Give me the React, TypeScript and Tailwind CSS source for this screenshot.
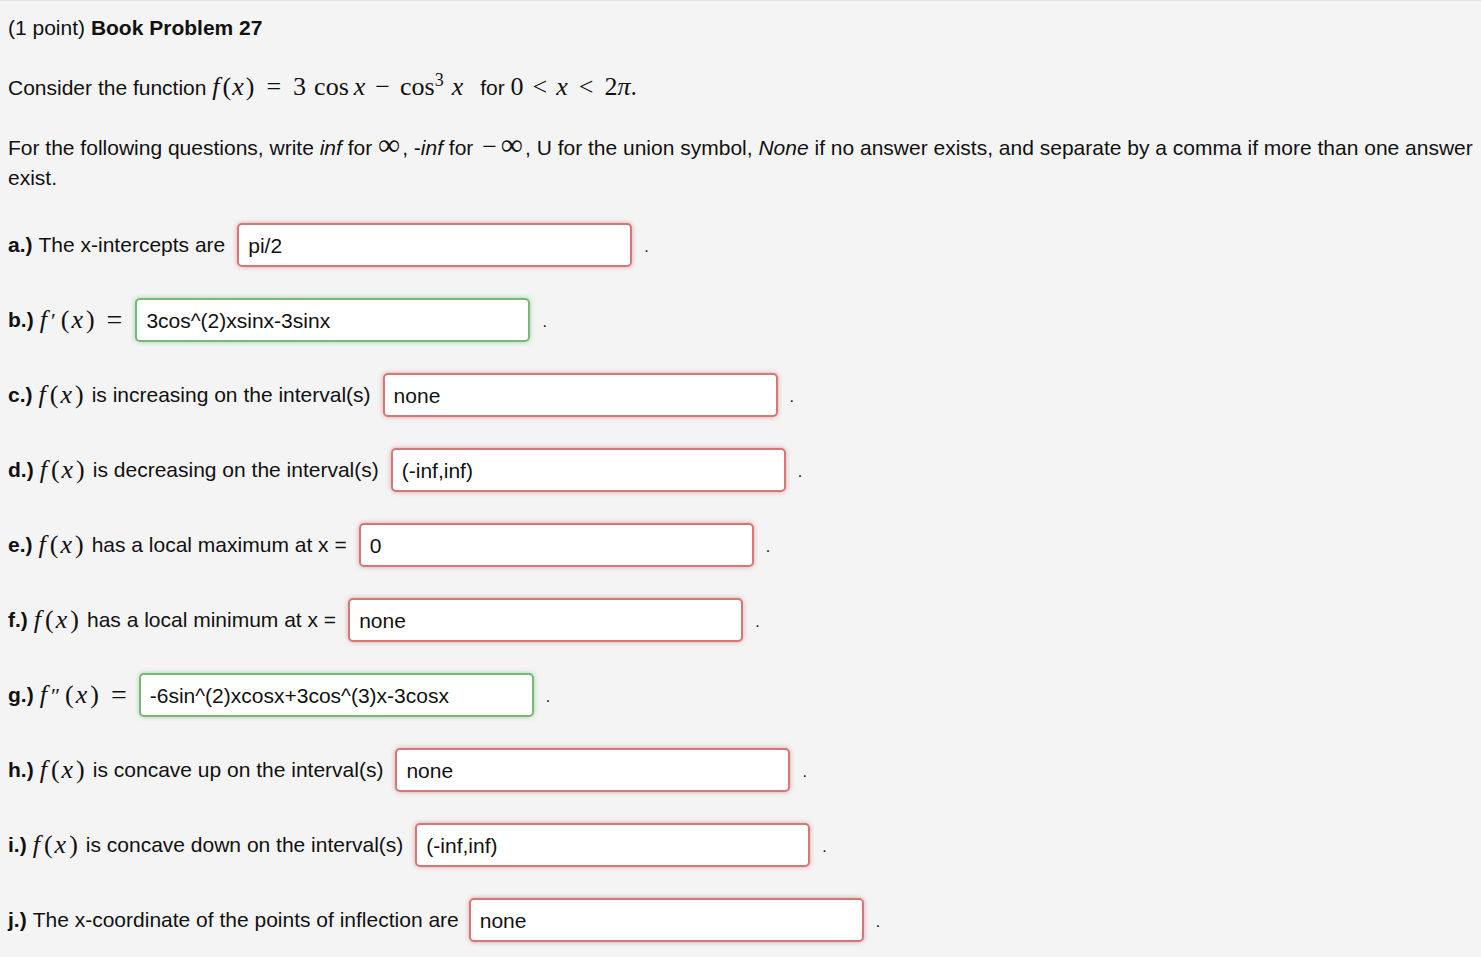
import React from 'react';

type Status = 'wrong' | 'right';

const M: React.FC<{ children: React.ReactNode; className?: string }> = ({ children, className }) => (
  <span className={`font-['Liberation_Serif','Times_New_Roman',serif] text-[26px] leading-none ${className ?? ''}`}>
    {children}
  </span>
);

const I: React.FC<{ children: React.ReactNode; className?: string }> = ({ children, className }) => (
  <span className={`italic ${className ?? ''}`}>{children}</span>
);

// f(x) typeset the way MathJax spaces it
const Fx: React.FC<{ prime?: string }> = ({ prime }) => (
  <M className="whitespace-nowrap">
    <I className="mr-[4px]">f</I>
    {prime && <span className="mr-[5px] text-[22px]">{prime}</span>}
    <span className="mr-[2px]">(</span>
    <I className="mr-[3px]">x</I>)
  </M>
);

const Inf: React.FC<{ minus?: boolean }> = ({ minus }) => (
  <span className="font-['Liberation_Serif','Times_New_Roman',serif] leading-[0] whitespace-nowrap">
    {minus && <span className="ml-[3px] mr-[4px] text-[26px] leading-[0]">−</span>}
    <span className="mr-[2px] text-[31px] leading-[0]">∞</span>
  </span>
);

const AnswerBox: React.FC<{ value: string; status: Status }> = ({ value, status }) => (
  <div
    className={
      status === 'right'
        ? 'flex h-[44px] w-[395px] items-center rounded-[5px] border-2 border-[#7ab67a] bg-white px-[9px] shadow-[0_0_5px_rgba(110,180,110,0.55)]'
        : 'flex h-[44px] w-[395px] items-center rounded-[5px] border-2 border-[#d27878] bg-white px-[9px] shadow-[0_0_5px_rgba(210,110,110,0.6)]'
    }
  >
    <span className="pt-[2px]">{value}</span>
  </div>
);

const Row: React.FC<{ tag: string; label: React.ReactNode; value: string; status?: Status; gap?: string }> = ({
  tag,
  label,
  value,
  status = 'wrong',
  gap = 'mr-[12px]',
}) => (
  <div className="mb-[31px] flex h-[44px] items-center">
    <span className="font-bold">{tag}</span>
    <span className={`ml-[6px] flex items-center gap-[8px] ${gap}`}>{label}</span>
    <AnswerBox value={value} status={status} />
    <span className="ml-[12px] pt-[4px] text-[16px]">.</span>
  </div>
);

export default function App() {
  return (
    <div className="min-h-[957px] border-y border-[#e2e2e2] bg-[#f4f4f4] pl-[8px] pt-[12px] font-['Liberation_Sans',Arial,sans-serif] text-[21px] leading-[30px] text-[#111]">
      <p className="mb-[30px]">
        (1 point) <span className="font-bold">Book Problem 27</span>
      </p>

      <p className="mb-[30px] whitespace-nowrap">
        Consider the function{' '}
        <M>
          <I className="mr-[3px]">f</I>
          <span className="mr-[1px]">(</span>
          <I className="mr-[2px]">x</I>)<span className="mx-[12px]">=</span>3
          <span className="ml-[8px]">cos</span>
          <I className="ml-[5px]">x</I>
          <span className="mx-[10px]">−</span>cos
          <sup className="text-[18px]">3</sup>
          <I className="ml-[8px]">x</I>
        </M>
        <span className="ml-[17px]">for </span>
        <M>
          0<span className="mx-[9px]">&lt;</span>
          <I>x</I>
          <span className="mx-[11px]">&lt;</span>2<I>π</I>.
        </M>
      </p>

      <p className="mb-[30px] pr-[6px]">
        For the following questions, write <I>inf</I> for <Inf />, -<I>inf</I> for <Inf minus />, U for the union
        symbol, <I>None</I> if no answer exists, and separate by a comma if more than one answer exist.
      </p>

      <Row tag="a.)" label={<span>The x-intercepts are</span>} value="pi/2" />
      <Row
        tag="b.)"
        label={
          <>
            <Fx prime="′" />
            <M className="ml-[4px] text-[28px]">=</M>
          </>
        }
        gap="mr-[13px]"
        value="3cos^(2)xsinx-3sinx"
        status="right"
      />
      <Row tag="c.)" label={<><Fx /><span>is increasing on the interval(s)</span></>} value="none" />
      <Row tag="d.)" label={<><Fx /><span>is decreasing on the interval(s)</span></>} value="(-inf,inf)" />
      <Row tag="e.)" label={<><Fx /><span>has a local maximum at x =</span></>} value="0" />
      <Row tag="f.)" label={<><Fx /><span>has a local minimum at x =</span></>} value="none" />
      <Row
        tag="g.)"
        label={
          <>
            <Fx prime="″" />
            <M className="ml-[4px] text-[28px]">=</M>
          </>
        }
        gap="mr-[12px]"
        value="-6sin^(2)xcosx+3cos^(3)x-3cosx"
        status="right"
      />
      <Row tag="h.)" label={<><Fx /><span>is concave up on the interval(s)</span></>} value="none" />
      <Row tag="i.)" label={<><Fx /><span>is concave down on the interval(s)</span></>} value="(-inf,inf)" />
      <Row
        tag="j.)"
        label={<span>The x-coordinate of the points of inflection are</span>}
        gap="mr-[10px]"
        value="none"
      />
    </div>
  );
}
